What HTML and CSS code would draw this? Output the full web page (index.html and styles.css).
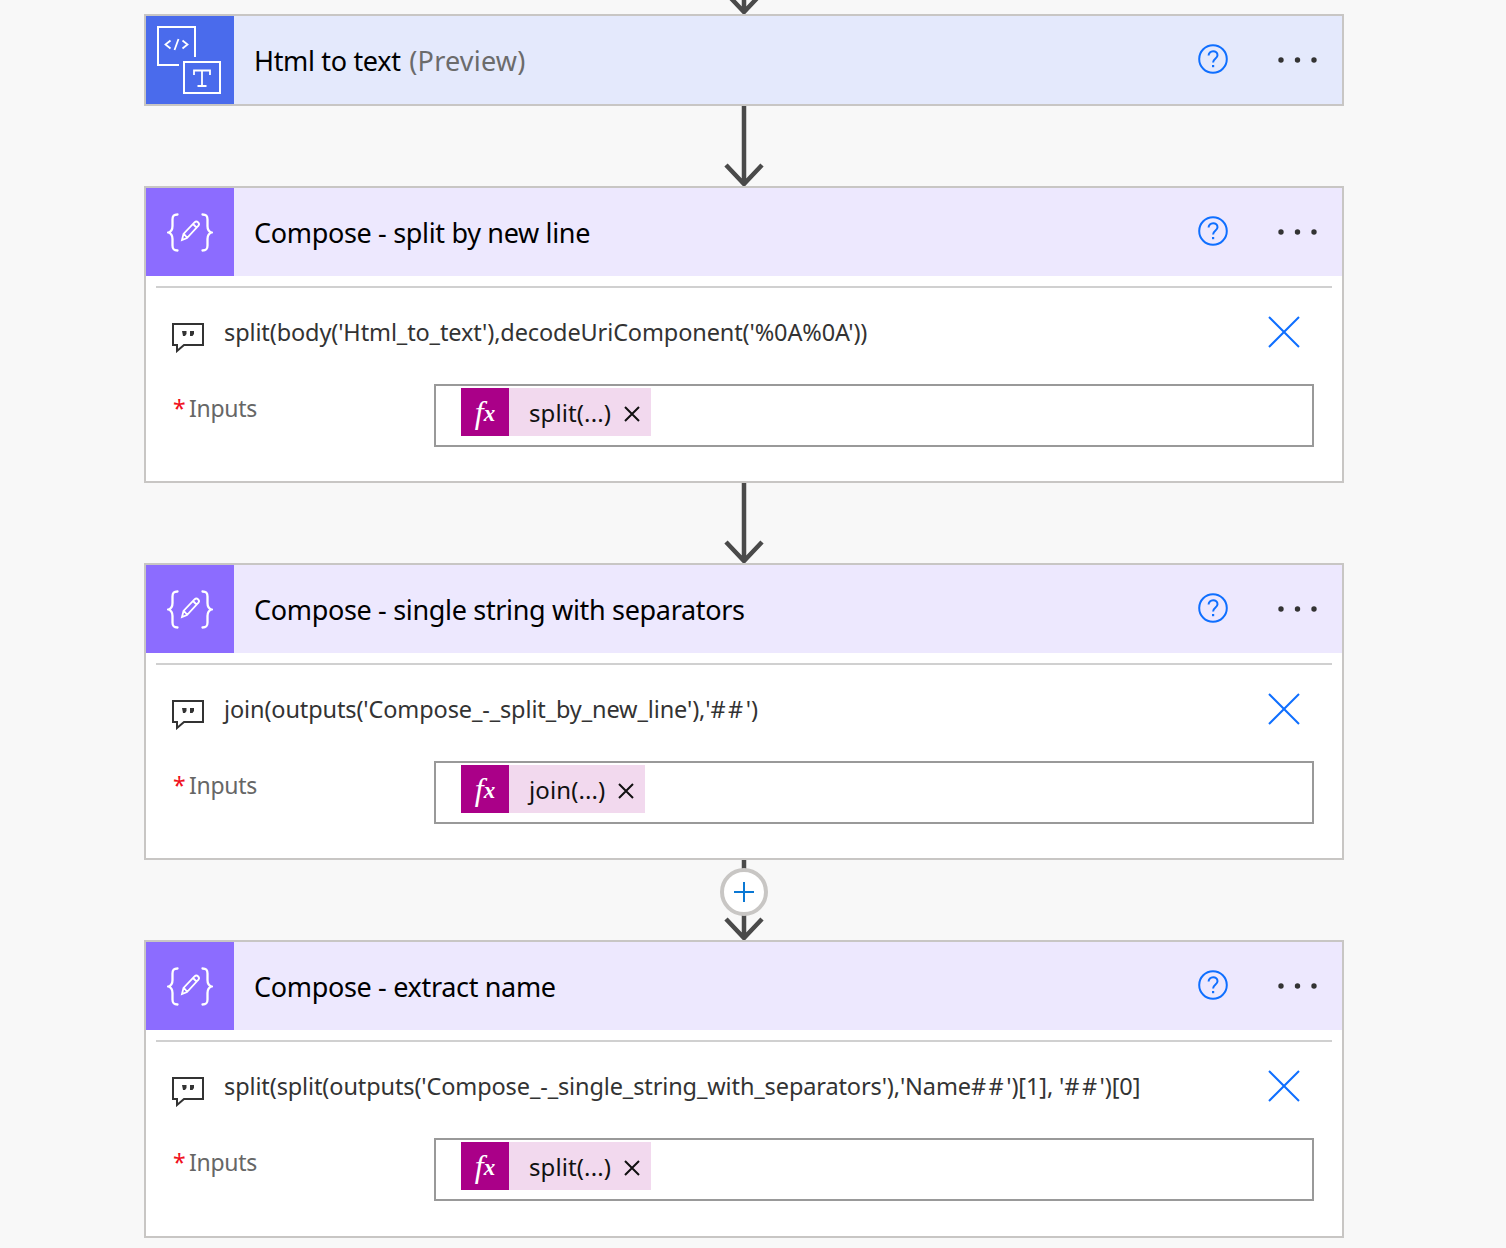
FILE: index.html
```html
<!DOCTYPE html>
<html lang="en">
<head>
<meta charset="utf-8">
<title>Flow</title>
<link rel="stylesheet" href="styles.css">
</head>
<body>
<svg class="defs" width="0" height="0" aria-hidden="true">
  <defs>
    <symbol id="help" viewBox="0 0 30 30">
      <circle cx="15" cy="15" r="13.8" fill="none" stroke="#0f6fff" stroke-width="2"/>
      <path d="M10.600 11.600c0-2.600 2-4.400 4.500-4.400s4.400 1.700 4.400 4c0 3.600-4.400 3.600-4.400 7.200" fill="none" stroke="#0f6fff" stroke-width="2"/>
      <rect x="14" y="21" width="2.200" height="2.200" fill="#0f6fff"/>
    </symbol>
    <symbol id="dots" viewBox="0 0 40 6">
      <circle cx="3" cy="3" r="2.700" fill="#333"/><circle cx="19.500" cy="3" r="2.700" fill="#333"/><circle cx="36" cy="3" r="2.700" fill="#333"/>
    </symbol>
    <symbol id="compose" viewBox="0 0 46 40">
      <g fill="none" stroke="#fff" stroke-width="2.300" stroke-linecap="round">
        <path d="M10.500 1.500c-4 0-5 1.500-5 5v6.500c0 3-1 5.500-4 6.500 3 1 4 3.500 4 6.500v6.500c0 3.500 1 5 5 5"/>
        <path d="M35.500 1.500c4 0 5 1.500 5 5v6.500c0 3 1 5.500 4 6.500-3 1-4 3.500-4 6.500v6.500c0 3.500-1 5-5 5"/>
        <path stroke-width="1.800" d="M15 27l1.500-6 11-11.500c1-1 2.700-1 3.700 0s1 2.500 0 3.500L20 25z M17 21l3 3.500 M26 11l3.500 3.500"/>
      </g>
    </symbol>
    <symbol id="comment" viewBox="0 0 32 30">
      <path d="M1 1h30v21H12l-7 6v-6H1z" fill="none" stroke="#333" stroke-width="2"/>
      <path d="M10 8h4.500v3l-1.500 2h-2zM18 8h4v3l-1.500 2H18z" fill="#333"/>
    </symbol>
    <symbol id="close-blue" viewBox="0 0 32 32">
      <path d="M1 1l30 30M31 1L1 31" fill="none" stroke="#0f6fff" stroke-width="2"/>
    </symbol>
    <symbol id="close-dark" viewBox="0 0 16 16">
      <path d="M1 1l14 14M15 1L1 15" fill="none" stroke="#111" stroke-width="2"/>
    </symbol>
    <symbol id="arrow" viewBox="0 0 40 80">
      <path d="M20 0v78M2 59l18 19 18-19" fill="none" stroke="#4a4a4a" stroke-width="4.500"/>
    </symbol>
  </defs>
</svg>
<main class="flow">
  <div class="connector connector-top"><svg class="arrow"><use href="#arrow"/></svg></div>

  <section class="card card-html">
    <header class="card-head">
      <div class="tile tile-html">
        <svg class="html-icon" viewBox="0 0 66 68" width="66" height="68">
          <path d="M38 31V1H1v38h21" fill="none" stroke="#fff" stroke-width="2"/>
          <rect x="27" y="36" width="36" height="31" fill="none" stroke="#fff" stroke-width="2"/>
          <path d="M13.500 14.500l-5 4 5 4M25.500 14.500l5 4-5 4M21.500 13l-4 11" fill="none" stroke="#fff" stroke-width="1.800"/>
          <path d="M37 49v-4.500h16V49M45 44.500V60M40.500 60h9" fill="none" stroke="#fff" stroke-width="1.800"/>
        </svg>
      </div>
      <h2 class="title">Html to text <span class="muted">(Preview)</span></h2>
      <svg class="help"><use href="#help"/></svg>
      <svg class="dots"><use href="#dots"/></svg>
    </header>
  </section>

  <div class="connector"><svg class="arrow"><use href="#arrow"/></svg></div>

  <section class="card">
    <header class="card-head">
      <div class="tile"><svg class="compose-icon"><use href="#compose"/></svg></div>
      <h2 class="title">Compose - split by new line</h2>
      <svg class="help"><use href="#help"/></svg>
      <svg class="dots"><use href="#dots"/></svg>
    </header>
    <div class="card-body">
      <div class="comment">
        <svg class="comment-icon"><use href="#comment"/></svg>
        <p class="comment-text">split(body('Html_to_text'),decodeUriComponent('%0A%0A'))</p>
        <svg class="close-blue"><use href="#close-blue"/></svg>
      </div>
      <div class="field">
        <label class="label"><span class="req">*</span>Inputs</label>
        <div class="input">
          <span class="token"><span class="fx"><i class="fx-f">f</i><i class="fx-x">x</i></span><span class="token-text">split(...)</span><svg class="close-dark"><use href="#close-dark"/></svg></span>
        </div>
      </div>
    </div>
  </section>

  <div class="connector"><svg class="arrow"><use href="#arrow"/></svg></div>

  <section class="card">
    <header class="card-head">
      <div class="tile"><svg class="compose-icon"><use href="#compose"/></svg></div>
      <h2 class="title">Compose - single string with separators</h2>
      <svg class="help"><use href="#help"/></svg>
      <svg class="dots"><use href="#dots"/></svg>
    </header>
    <div class="card-body">
      <div class="comment">
        <svg class="comment-icon"><use href="#comment"/></svg>
        <p class="comment-text">join(outputs('Compose_-_split_by_new_line'),'<span class="hash">##</span>')</p>
        <svg class="close-blue"><use href="#close-blue"/></svg>
      </div>
      <div class="field">
        <label class="label"><span class="req">*</span>Inputs</label>
        <div class="input">
          <span class="token"><span class="fx"><i class="fx-f">f</i><i class="fx-x">x</i></span><span class="token-text">join(...)</span><svg class="close-dark"><use href="#close-dark"/></svg></span>
        </div>
      </div>
    </div>
  </section>

  <div class="connector">
    <svg class="arrow"><use href="#arrow"/></svg>
    <button class="add" type="button" aria-label="Insert a new step">
      <svg viewBox="0 0 20 20" width="20" height="20"><path d="M10 0v20M0 10h20" fill="none" stroke="#0a78d4" stroke-width="2"/></svg>
    </button>
  </div>

  <section class="card card-last">
    <header class="card-head">
      <div class="tile"><svg class="compose-icon"><use href="#compose"/></svg></div>
      <h2 class="title">Compose - extract name</h2>
      <svg class="help"><use href="#help"/></svg>
      <svg class="dots"><use href="#dots"/></svg>
    </header>
    <div class="card-body">
      <div class="comment">
        <svg class="comment-icon"><use href="#comment"/></svg>
        <p class="comment-text">split(split(outputs('Compose_-_single_string_with_separators'),'Name<span class="hash">##</span>')[1], '<span class="hash">##</span>')[0]</p>
        <svg class="close-blue"><use href="#close-blue"/></svg>
      </div>
      <div class="field">
        <label class="label"><span class="req">*</span>Inputs</label>
        <div class="input">
          <span class="token"><span class="fx"><i class="fx-f">f</i><i class="fx-x">x</i></span><span class="token-text">split(...)</span><svg class="close-dark"><use href="#close-dark"/></svg></span>
        </div>
      </div>
    </div>
  </section>
</main>
</body>
</html>
```
FILE: styles.css
```css
* { box-sizing: border-box; }
html, body { margin: 0; height: 100%; overflow: hidden; }
body { background: #f8f8f8; font-family: "Noto Sans", "Open Sans", sans-serif; color: #000; }
.defs { position: absolute; }
.flow { width: 1200px; margin-left: 144px; display: flex; flex-direction: column; }
.connector { position: relative; height: 80px; display: flex; justify-content: center; }
.connector-top { height: 14px; overflow: hidden; align-items: flex-end; }
.arrow { width: 40px; height: 80px; flex: none; }
.card { border: 2px solid #c8c6c4; background: #fff; }
.card-html .card-head { background: #e4e9fc; }
.card-head { height: 88px; display: flex; align-items: center; background: #ede8fe; }
.tile { width: 88px; height: 88px; flex: none; display: flex; align-items: center; justify-content: center; background: #8c6cff; }
.tile-html { background: #4a6bec; }
.html-icon { flex: none; }
.compose-icon { width: 46px; height: 40px; margin-top: 1px; }
.title { flex: 1; margin: 2px 0 0 20px; font-size: 27px; letter-spacing: -0.33px; font-weight: 400; line-height: 36px; }
.muted { color: #6b6b6b; margin-left: 2px; letter-spacing: 0.2px; }
.help { width: 30px; height: 30px; margin-right: 50px; margin-top: -2px; }
.dots { width: 40px; height: 6px; margin-right: 24px; }
.card-body { margin: 10px 10px 0; border-top: 2px solid #d0d0d0; padding: 0 18px 34px 16px; }
.card-last .card-body { padding-bottom: 35px; }
.comment { display: flex; align-items: center; height: 88px; margin-bottom: 8px; }
.comment-icon { width: 32px; height: 30px; margin-top: 12px; flex: none; }
.comment-text { flex: 1; margin: 0 0 0 20px; font-size: 23.5px; letter-spacing: -0.12px; line-height: 30px; color: #333; }
.hash { letter-spacing: 2.5px; }
.close-blue { width: 32px; height: 32px; margin-right: 14px; flex: none; }
.field { display: flex; align-items: flex-start; }
.label { width: 262px; flex: none; font-size: 23px; letter-spacing: -0.3px; line-height: 30px; color: #666; margin-top: 9px; }
.req { color: #f01020; display: inline-block; width: 17px; padding-left: 1px; }
.input { width: 880px; height: 63px; border: 2px solid #999; padding: 2px 0 0 25px; background: #fff; }
.token { display: inline-flex; align-items: center; height: 48px; background: #f2d9ee; padding-right: 11px; }
.fx { width: 48px; height: 48px; background: #aa0088; color: #fff; font-family: "Liberation Serif", serif; display: flex; align-items: center; justify-content: center; }
.fx-f { font-size: 32px; font-style: italic; line-height: 46px; }
.fx-x { font-size: 23px; font-style: italic; font-weight: 700; line-height: 46px; margin-top: 4px; }
.token-text { margin-left: 20px; margin-top: 2px; font-size: 24px; letter-spacing: 0.1px; line-height: 48px; color: #111; }
.close-dark { width: 16px; height: 16px; margin-left: 13px; margin-top: 3px; }
.add { position: absolute; left: 576px; top: 8px; width: 48px; height: 48px; padding: 0; border: 4px solid #c8c6c4; border-radius: 50%; background: #fff; display: flex; align-items: center; justify-content: center; }
```
